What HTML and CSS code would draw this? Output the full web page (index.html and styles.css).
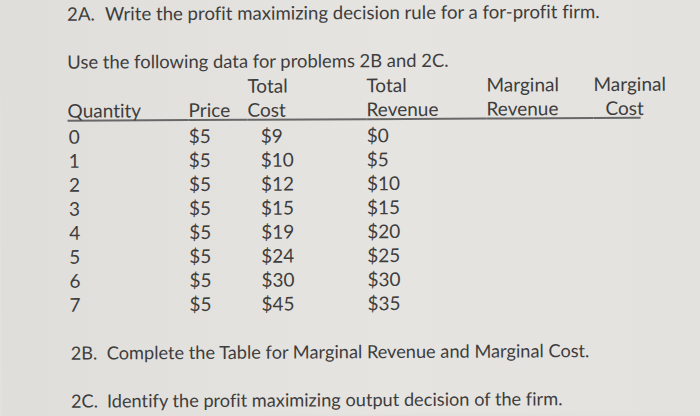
FILE: index.html
```html
<!DOCTYPE html>
<html>
<head>
<meta charset="utf-8">
<link rel="stylesheet" href="styles.css">
</head>
<body>
<div class="sheet">
  <p class="q title"><span class="num">2A.</span>Write the profit maximizing decision rule for a for-profit firm.</p>
  <div class="block">
    <p class="intro">Use the following data for problems 2B and 2C.</p>
    <div class="table">
      <div class="hrow top">
        <span></span><span></span><span>Total</span><span>Total</span><span>Marginal</span><span>Marginal</span>
      </div>
      <div class="hrow bottom">
        <span>Quantity</span><span>Price</span><span>Cost</span><span>Revenue</span><span>Revenue</span><span class="mc">Cost</span>
      </div>
      <div class="row"><span>0</span><span>$5</span><span class="tc">$9</span><span>$0</span><span></span><span></span></div>
      <div class="row"><span>1</span><span>$5</span><span class="tc">$10</span><span>$5</span><span></span><span></span></div>
      <div class="row"><span>2</span><span>$5</span><span class="tc">$12</span><span>$10</span><span></span><span></span></div>
      <div class="row"><span>3</span><span>$5</span><span class="tc">$15</span><span>$15</span><span></span><span></span></div>
      <div class="row"><span>4</span><span>$5</span><span class="tc">$19</span><span>$20</span><span></span><span></span></div>
      <div class="row"><span>5</span><span>$5</span><span class="tc">$24</span><span>$25</span><span></span><span></span></div>
      <div class="row"><span>6</span><span>$5</span><span class="tc">$30</span><span>$30</span><span></span><span></span></div>
      <div class="row"><span>7</span><span>$5</span><span class="tc">$45</span><span>$35</span><span></span><span></span></div>
    </div>
  </div>
  <p class="q part"><span class="num">2B.</span>Complete the Table for Marginal Revenue and Marginal Cost.</p>
  <p class="q part"><span class="num">2C.</span>Identify the profit maximizing output decision of the firm.</p>
</div>
</body>
</html>
```
FILE: styles.css
```css
html, body {
  margin: 0;
  padding: 0;
  background: #e3e1de;
  overflow: hidden;
}
.sheet {
  width: 700px;
  height: 416px;
  background: linear-gradient(90deg, #e0dedb 0%, #e6e4e1 55%, #e4e2df 100%);
  font-family: "Lato", "Liberation Sans", sans-serif;
  font-variant-ligatures: none;
  font-size: 18.5px;
  color: #3d3d3d;
  box-sizing: border-box;
  padding-top: 2px;
  transform: rotate(-0.28deg);
  transform-origin: 0 0;
}
p { margin: 0; }
.q {
  line-height: 24px;
  white-space: nowrap;
}
.title {
  padding-left: 67px;
  font-size: 18.6px;
}
.num {
  display: inline-block;
  width: 38px;
}
.block {
  padding-left: 67px;
  margin-top: 24px;
}
.intro {
  line-height: 24px;
  font-size: 18.4px;
}
.table {
  display: grid;
  grid-template-columns: 121px 59px 119px 120px 107px 47px;
  width: 573px;
  margin-top: 0.5px;
  font-size: 19px;
}
.hrow, .row {
  display: contents;
}
.table span {
  line-height: 24px;
  white-space: nowrap;
}
.bottom span {
  border-bottom: 2px solid #686868;
  line-height: 19px;
  padding-top: 2.5px;
  margin-bottom: 2.5px;
}
.bottom .mc { padding-left: 12px; }
.tc { padding-left: 13px; }
.row span:first-child { padding-left: 1px; }
.part {
  padding-left: 69px;
  margin-top: 24px;
  font-size: 18.2px;
}
.part .num { width: 36px; }
```
